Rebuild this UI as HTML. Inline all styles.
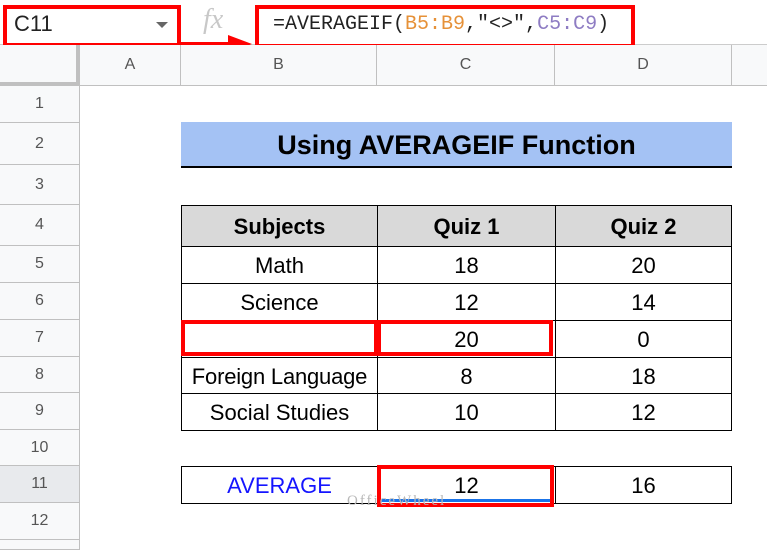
<!DOCTYPE html>
<html><head><style>
*{margin:0;padding:0;box-sizing:border-box}
body{width:767px;height:543px;background:#fff;font-family:"Liberation Sans",Arial,sans-serif;position:relative;overflow:hidden}
.a{position:absolute}
.rh{position:absolute;left:0;width:80px;background:#f8f9fa;border-bottom:1px solid #c0c0c0;border-right:1px solid #c0c0c0;color:#555;font-size:16px;display:flex;align-items:center;justify-content:center}
.ch{position:absolute;top:45px;height:41px;background:#f8f9fa;border-right:1px solid #c0c0c0;border-bottom:1px solid #c0c0c0;color:#555;font-size:16px;display:flex;align-items:center;justify-content:center}
.c{position:absolute;border:1.5px solid #000;display:flex;align-items:center;justify-content:center;font-size:22px;color:#000;background:#fff;padding-top:2px}
.red{position:absolute;border:4px solid #f00}
</style></head><body>
<div class="a" style="left:0;top:0;width:767px;height:45px;border-bottom:1px solid #ccc;background:#fff"></div>
<div class="red" style="left:3px;top:5px;width:178px;height:42px"></div>
<div class="a" style="left:14px;top:11px;font-size:22px;color:#222">C11</div>
<div class="a" style="left:156px;top:22px;width:0;height:0;border-left:6px solid transparent;border-right:6px solid transparent;border-top:6px solid #666"></div>
<div class="a" style="left:203px;top:4px;font-family:'Liberation Serif',serif;font-style:italic;font-size:28px;color:#c8c8c8">fx</div>
<div class="a" style="left:181px;top:42px;width:52px;height:4px;background:#f00"></div>
<div class="a" style="left:228px;top:35px;width:0;height:0;border-top:9px solid transparent;border-bottom:9px solid transparent;border-left:24px solid #f00"></div>
<div class="red" style="left:255px;top:5px;width:380px;height:43px"></div>
<div class="a" style="left:273px;top:13px;font-family:'Liberation Mono',monospace;font-size:20px;color:#222;letter-spacing:0">=AVERAGEIF(<span style="color:#e69138">B5:B9</span>,"&lt;&gt;",<span style="color:#8e7cc3">C5:C9</span>)</div>
<div class="a" style="left:0;top:45px;width:80px;height:41px;background:#f8f9fa;border-right:4px solid #c0c0c0;border-bottom:4px solid #c0c0c0"></div>
<div class="ch" style="left:80px;width:101px">A</div>
<div class="ch" style="left:181px;width:196px">B</div>
<div class="ch" style="left:377px;width:178px">C</div>
<div class="ch" style="left:555px;width:177px">D</div>
<div class="ch" style="left:732px;width:40px"></div>
<div class="rh" style="top:86px;height:37px">1</div>
<div class="rh" style="top:123px;height:42px">2</div>
<div class="rh" style="top:165px;height:40px">3</div>
<div class="rh" style="top:205px;height:41px">4</div>
<div class="rh" style="top:246px;height:37px">5</div>
<div class="rh" style="top:283px;height:37px">6</div>
<div class="rh" style="top:320px;height:37px">7</div>
<div class="rh" style="top:357px;height:36px">8</div>
<div class="rh" style="top:393px;height:37px">9</div>
<div class="rh" style="top:430px;height:36px">10</div>
<div class="rh" style="top:466px;height:37px;background:#e8eaed">11</div>
<div class="rh" style="top:503px;height:37px">12</div>
<div class="rh" style="top:540px;height:10px"></div>
<div class="a" style="left:181px;top:122px;width:551px;height:46px;background:#a4c2f4;border-bottom:2px solid #000;display:flex;align-items:center;justify-content:center;font-weight:bold;font-size:27px;padding-top:3px">Using AVERAGEIF Function</div>

<div class="c" style="left:181px;top:205px;width:197px;height:42px;background:#d9d9d9;font-weight:bold">Subjects</div>
<div class="c" style="left:377px;top:205px;width:179px;height:42px;background:#d9d9d9;font-weight:bold">Quiz 1</div>
<div class="c" style="left:555px;top:205px;width:177px;height:42px;background:#d9d9d9;font-weight:bold">Quiz 2</div>

<div class="c" style="left:181px;top:246px;width:197px;height:38px">Math</div>
<div class="c" style="left:377px;top:246px;width:179px;height:38px">18</div>
<div class="c" style="left:555px;top:246px;width:177px;height:38px">20</div>
<div class="c" style="left:181px;top:283px;width:197px;height:38px">Science</div>
<div class="c" style="left:377px;top:283px;width:179px;height:38px">12</div>
<div class="c" style="left:555px;top:283px;width:177px;height:38px">14</div>
<div class="c" style="left:181px;top:320px;width:197px;height:38px"></div>
<div class="c" style="left:377px;top:320px;width:179px;height:38px">20</div>
<div class="c" style="left:555px;top:320px;width:177px;height:38px">0</div>
<div class="c" style="left:181px;top:357px;width:197px;height:37px;letter-spacing:-0.2px">Foreign Language</div>
<div class="c" style="left:377px;top:357px;width:179px;height:37px">8</div>
<div class="c" style="left:555px;top:357px;width:177px;height:37px">18</div>
<div class="c" style="left:181px;top:393px;width:197px;height:38px">Social Studies</div>
<div class="c" style="left:377px;top:393px;width:179px;height:38px">10</div>
<div class="c" style="left:555px;top:393px;width:177px;height:38px">12</div>

<div class="c" style="left:181px;top:466px;width:197px;height:38px;color:#1515ff">AVERAGE</div>
<div class="c" style="left:377px;top:466px;width:179px;height:38px">12</div>
<div class="c" style="left:555px;top:466px;width:177px;height:38px">16</div>
<div class="a" style="left:380px;top:499px;width:174px;height:3px;background:#1a73e8"></div>

<div class="red" style="left:181px;top:320px;width:197px;height:36px"></div>
<div class="red" style="left:377px;top:320px;width:176px;height:36px"></div>
<div class="red" style="left:377px;top:465px;width:177px;height:42px"></div>
<div class="a" style="left:347px;top:493px;font-size:15px;color:#b8b8b8;letter-spacing:2px;font-family:'Liberation Serif',serif">OfficeWheel</div>
</body></html>
